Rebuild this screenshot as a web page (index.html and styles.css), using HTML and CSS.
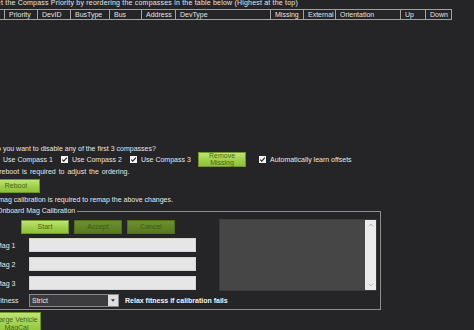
FILE: index.html
```html
<!DOCTYPE html>
<html lang="en">
<head>
    <meta charset="UTF-8">
    <title>Compass Setup</title>
    <link rel="stylesheet" href="styles.css">
</head>
<body>
    <div class="form">
        <p class="title">Set the Compass Priority by reordering the compasses in the table below (Highest at the top)</p>

        <div class="grid">
            <div class="grid-head">
                <span class="hcell" style="width:12px"></span>
                <span class="hcell" style="width:33px">Priority</span>
                <span class="hcell" style="width:33px">DevID</span>
                <span class="hcell" style="width:39px">BusType</span>
                <span class="hcell" style="width:32px">Bus</span>
                <span class="hcell" style="width:34px">Address</span>
                <span class="hcell" style="width:95px">DevType</span>
                <span class="hcell" style="width:33px">Missing</span>
                <span class="hcell" style="width:32px">External</span>
                <span class="hcell" style="width:65px">Orientation</span>
                <span class="hcell" style="width:25px">Up</span>
                <span class="hcell last" style="width:27px">Down</span>
            </div>
        </div>

        <p class="note question">Do you want to disable any of the first 3 compasses?</p>
        <div class="checks">
            <label class="check item"><span class="box"><svg viewBox="0 0 7 7"><path d="M1.2 3.6 L2.8 5.2 L5.9 1.6" /></svg></span>Use Compass 1</label>
            <label class="check item"><span class="box"><svg viewBox="0 0 7 7"><path d="M1.2 3.6 L2.8 5.2 L5.9 1.6" /></svg></span>Use Compass 2</label>
            <label class="check item"><span class="box"><svg viewBox="0 0 7 7"><path d="M1.2 3.6 L2.8 5.2 L5.9 1.6" /></svg></span>Use Compass 3</label>
            <button class="btn on remove">Remove<br>Missing</button>
            <label class="check auto"><span class="box"><svg viewBox="0 0 7 7"><path d="M1.2 3.6 L2.8 5.2 L5.9 1.6" /></svg></span>Automatically learn offsets</label>
        </div>

        <p class="note reboot-note">A reboot is required to adjust the ordering.</p>
        <button class="btn on reboot">Reboot</button>
        <p class="note remap-note">A mag calibration is required to remap the above changes.</p>

        <fieldset class="group">
            <legend>Onboard Mag Calibration</legend>
            <div class="group-body">
                <div class="cal-left">
                    <div class="cal-buttons">
                        <button class="btn on">Start</button>
                        <button class="btn off">Accept</button>
                        <button class="btn off">Cancel</button>
                    </div>
                    <div class="field"><label>Mag 1</label><div class="textbox"></div></div>
                    <div class="field"><label>Mag 2</label><div class="textbox"></div></div>
                    <div class="field"><label>Mag 3</label><div class="textbox"></div></div>
                    <div class="field fitness">
                        <label>Fitness</label>
                        <div class="combo">
                            <span>Strict</span>
                            <span class="drop"><svg viewBox="0 0 5 3"><path d="M0 0 H5 L2.5 3 Z" /></svg></span>
                        </div>
                        <span class="relax">Relax fitness if calibration fails</span>
                    </div>
                </div>
                <div class="log">
                    <div class="log-area"></div>
                    <div class="scroll">
                        <svg viewBox="0 0 7 4"><path d="M1 3.5 L3.5 1 L6 3.5" /></svg>
                        <svg viewBox="0 0 7 4"><path d="M1 0.5 L3.5 3 L6 0.5" /></svg>
                    </div>
                </div>
            </div>
        </fieldset>

        <button class="btn on big">Large Vehicle<br>MagCal</button>
    </div>
</body>
</html>
```

FILE: styles.css
```css
body {
    margin: 0;
    height: 330px;
    overflow: hidden;
    background-color: #252527;
    color: #e6e6e6;
    font-family: "Liberation Sans", Arial, sans-serif;
    font-size: 7px;
}

p {
    margin: 0;
}

/* the window is scrolled a little to the right, so everything starts off-screen */
.form {
    margin-left: -8px;
}

.title {
    margin-top: -2px;
    line-height: 10px;
    white-space: nowrap;
    letter-spacing: 0.2px;
}

.grid {
    margin-top: 1px;
    height: 131px;
}

.grid-head {
    display: flex;
}

.hcell {
    box-sizing: border-box;
    height: 11px;
    line-height: 9px;
    padding-left: 4px;
    border: 1px solid #a2a2a2;
    border-right: none;
    color: #e2e2e2;
    white-space: nowrap;
}

.hcell.last {
    border-right: 1px solid #a2a2a2;
}

.note {
    line-height: 8px;
    white-space: nowrap;
}

.question {
    margin-top: 5px;
}

.checks {
    display: flex;
    align-items: center;
    height: 15px;
    margin-top: -1px;
}

.check {
    display: flex;
    align-items: center;
    gap: 4px;
    white-space: nowrap;
}

.check.item {
    width: 69px;
}

.check.item:nth-child(3) {
    width: 68px;
}

.check.auto {
    margin-left: 13px;
}

.box {
    width: 7px;
    height: 7px;
    background-color: #f4f4f4;
    display: flex;
}

.box svg {
    width: 7px;
    height: 7px;
}

.box path {
    fill: none;
    stroke: #2a2a2a;
    stroke-width: 1.2;
}

.btn {
    box-sizing: border-box;
    display: block;
    width: 48px;
    height: 14px;
    padding: 0;
    font-family: "Liberation Sans", Arial, sans-serif;
    font-size: 7px;
    line-height: 8px;
    border: 1px solid #6f962a;
}

.btn.on {
    background: linear-gradient(#bfe474, #9fcf4a 55%, #8fc13a);
    color: #456617;
}

.btn.off {
    background: linear-gradient(#6d902f, #58781f);
    border-color: #4f6d1b;
    color: #3f5c12;
}

.btn.remove {
    height: 15px;
    line-height: 6.5px;
}

.reboot-note {
    margin-top: 1px;
    word-spacing: 1px;
}

.reboot {
    margin-top: 3px;
}

.remap-note {
    margin-top: 3px;
}

.group {
    box-sizing: border-box;
    width: 387px;
    margin: 3px 0 0 2px;
    padding: 5px 0 2px 1px;
    border: 1px solid #8e8e8e;
    min-width: 0;
}

.group legend {
    padding: 0 2px 0 1px;
    line-height: 8px;
    white-space: nowrap;
}

.group-body {
    display: flex;
    align-items: flex-start;
}

.cal-left {
    width: 223px;
}

.cal-buttons {
    display: flex;
    gap: 5px;
    margin-left: 25px;
}

.field {
    display: flex;
    align-items: center;
    margin-top: 5px;
}

.cal-buttons + .field {
    margin-top: 4px;
}

.field label {
    width: 33px;
    flex-shrink: 0;
    white-space: nowrap;
}

.textbox {
    width: 167px;
    height: 14px;
    background-color: #e6e6e6;
    border: 1px solid #d4d4d4;
    box-sizing: border-box;
}

.fitness {
    margin-top: 4px;
}

.combo {
    box-sizing: border-box;
    width: 90px;
    height: 13px;
    display: flex;
    align-items: center;
    justify-content: space-between;
    background-color: #3c3c3e;
    border: 1px solid #8a8a8a;
    padding-left: 2px;
    flex-shrink: 0;
}

.drop {
    width: 10px;
    height: 11px;
    background-color: #dedede;
    display: flex;
    align-items: center;
    justify-content: center;
}

.drop svg {
    width: 4px;
    height: 3px;
}

.drop path {
    fill: #333;
}

.relax {
    margin-left: 6px;
    font-weight: bold;
    white-space: nowrap;
    color: #f2f2f2;
}

.log {
    display: flex;
    width: 158px;
    height: 72px;
    margin-top: -1px;
    border: 1px solid #3a3a3a;
    box-sizing: border-box;
}

.log-area {
    flex: 1;
    background-color: #464647;
}

.scroll {
    width: 11px;
    background-color: #ececec;
    display: flex;
    flex-direction: column;
    justify-content: space-between;
    align-items: center;
    padding: 3px 0;
}

.scroll svg {
    width: 6px;
    height: 4px;
}

.scroll path {
    fill: none;
    stroke: #a8a8a8;
    stroke-width: 1;
}

.btn.big {
    width: 49px;
    height: 24px;
    margin-top: 2px;
}
```
